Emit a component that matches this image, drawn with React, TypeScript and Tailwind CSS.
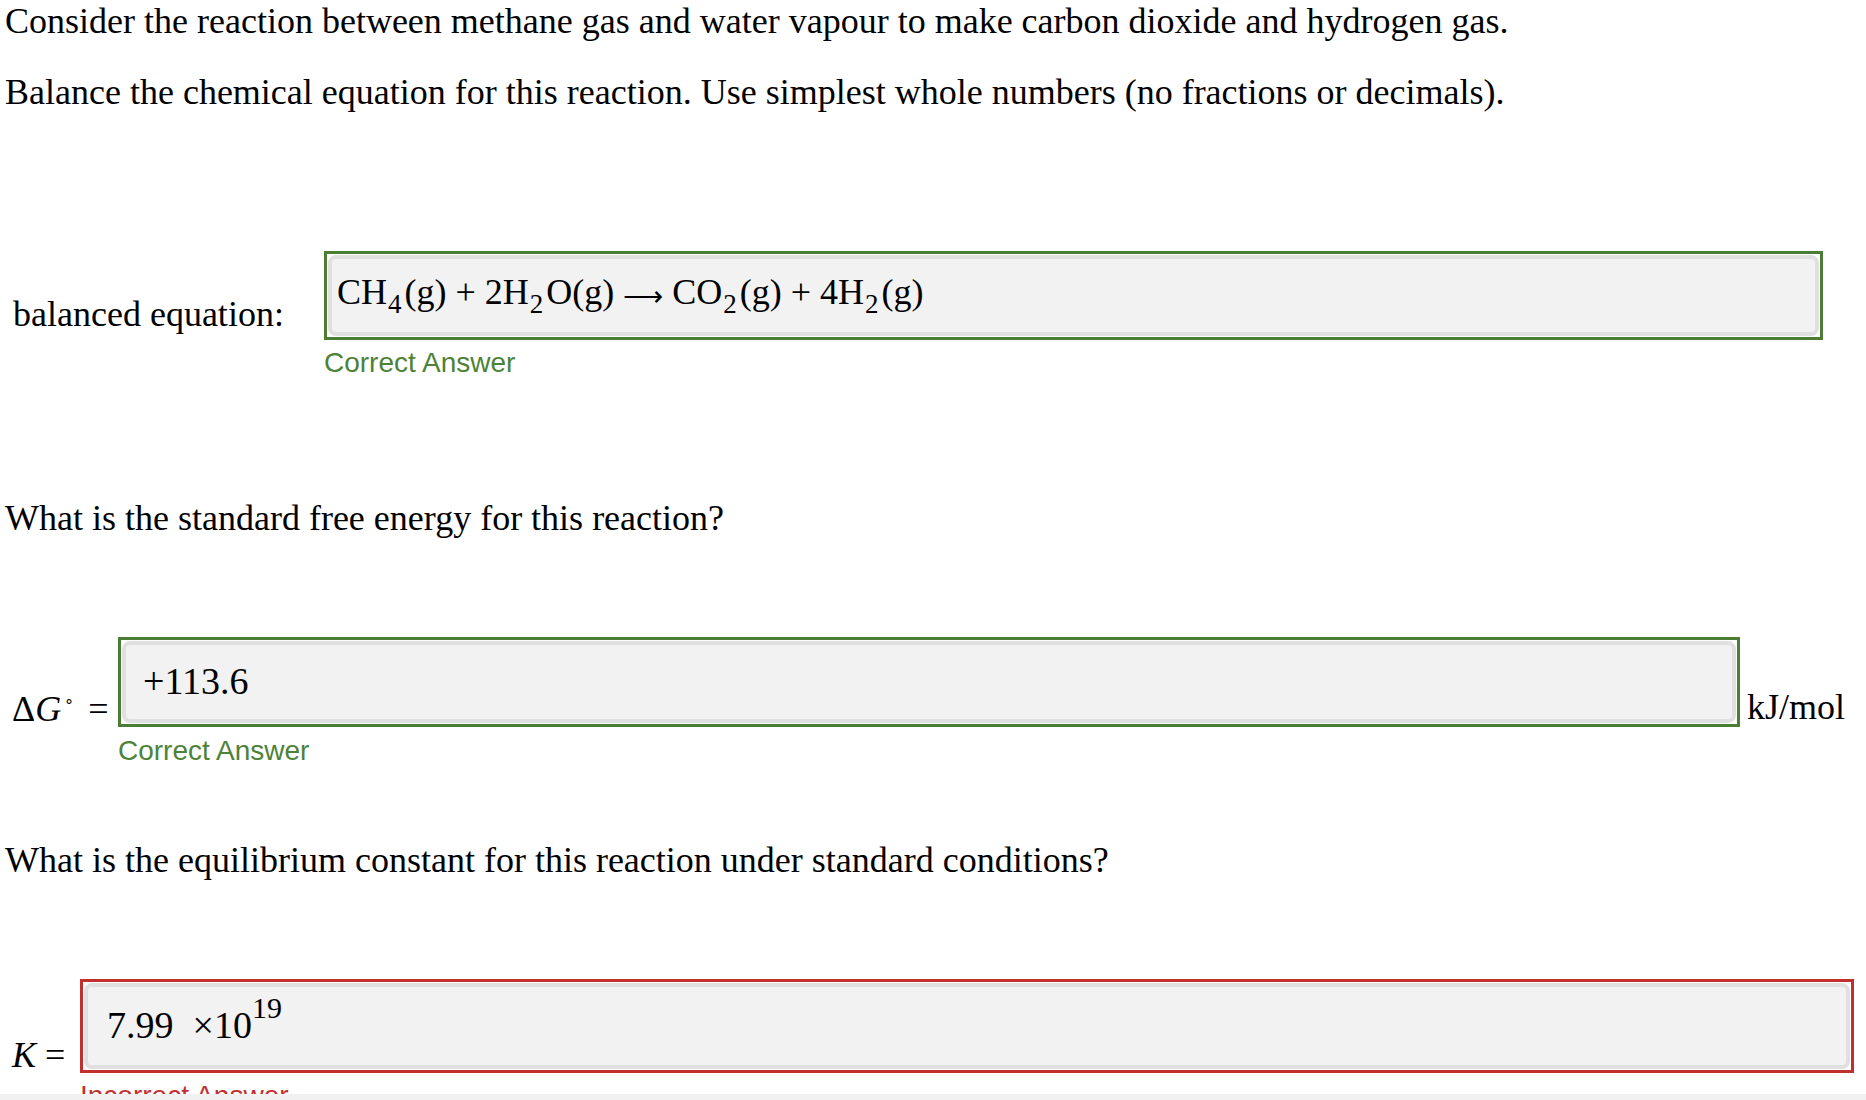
import React from "react";

const serif = { fontFamily: '"Liberation Serif", "Times New Roman", serif' };
const sans = { fontFamily: '"Liberation Sans", Arial, sans-serif' };

function Box({ color, className, children }: { color: "green" | "red"; className: string; children: React.ReactNode }) {
  return (
    <div
      className={`${className} shrink-0 p-px bg-white border-[3px] ${color === "green" ? "border-[#4b7e34]" : "border-[#c1302f]"}`}
    >
      <div className="h-full w-full rounded-[8px] border-[4px] border-[#e0e0e0] bg-[#f2f2f2]">{children}</div>
    </div>
  );
}

function Sub({ children }: { children: React.ReactNode }) {
  return <span className="text-[27px] align-[-9px] leading-none ml-px mr-[3px]">{children}</span>;
}

export default function App() {
  return (
    <div
      className="relative w-[1866px] h-[1100px] overflow-hidden bg-white text-black text-[36px] leading-[42px]"
      style={serif}
    >
      <p className="h-[42px] pl-[5px] whitespace-nowrap">
        Consider the reaction between methane gas and water vapour to make carbon dioxide and hydrogen gas.
      </p>
      <p className="mt-[29px] h-[42px] pl-[5px] whitespace-nowrap">
        Balance the chemical equation for this reaction. Use simplest whole numbers (no fractions or decimals).
      </p>

      {/* Row 1 */}
      <div className="mt-[138px] flex items-start">
        <div className="w-[324px] shrink-0 pl-[13px] pt-[42px] whitespace-nowrap">balanced equation:</div>
        <div className="flex flex-col">
          <Box color="green" className="w-[1499px] h-[89px]">
            <div className="pl-[5px] pt-[12px] whitespace-nowrap text-[36px]">
              CH<Sub>4</Sub>(g) + 2H<Sub>2</Sub>O(g) <span className="text-[28px] align-[-2px]">⟶</span> CO<Sub>2</Sub>(g) + 4H
              <Sub>2</Sub>(g)
            </div>
          </Box>
          <div className="mt-[7px] h-[31px] text-[28px] leading-[31px] text-[#4d8237]" style={sans}>
            Correct Answer
          </div>
        </div>
      </div>

      <p className="mt-[119px] h-[42px] pl-[5px] whitespace-nowrap">What is the standard free energy for this reaction?</p>

      {/* Row 2 */}
      <div className="mt-[98px] flex items-start">
        <div className="w-[118px] shrink-0 pl-[12px] pt-[51px] whitespace-nowrap">
          Δ<i>G</i>
          <span className="text-[16px] align-[14px] leading-none ml-[3px]">∘</span>
          <span className="ml-[14px]">=</span>
        </div>
        <div className="flex flex-col">
          <Box color="green" className="w-[1622px] h-[90px]">
            <div className="pl-[17px] pt-[15px] whitespace-nowrap text-[38px]">+113.6</div>
          </Box>
          <div className="mt-[8px] h-[31px] text-[28px] leading-[31px] text-[#4d8237]" style={sans}>
            Correct Answer
          </div>
        </div>
        <div className="ml-[7px] pt-[49px] whitespace-nowrap">kJ/mol</div>
      </div>

      <p className="mt-[73px] h-[42px] pl-[5px] whitespace-nowrap">
        What is the equilibrium constant for this reaction under standard conditions?
      </p>

      {/* Row 3 */}
      <div className="mt-[98px] flex items-start">
        <div className="w-[80px] shrink-0 pl-[12px] pt-[55px] whitespace-nowrap">
          <i>K</i> =
        </div>
        <div className="flex flex-col">
          <Box color="red" className="w-[1774px] h-[94px]">
            <div className="pl-[19px] pt-[12px] whitespace-nowrap text-[38px]">
              7.99&nbsp; ×10<span className="relative -top-[6px] text-[30px] align-[14px] leading-none">19</span>
            </div>
          </Box>
          <div className="mt-[7px] h-[31px] text-[28px] leading-[31px] text-[#c1302f]" style={sans}>
            Incorrect Answer
          </div>
        </div>
      </div>

      <div className="absolute bottom-0 left-0 h-[6px] w-full bg-[#f1f1f1]" />
    </div>
  );
}
